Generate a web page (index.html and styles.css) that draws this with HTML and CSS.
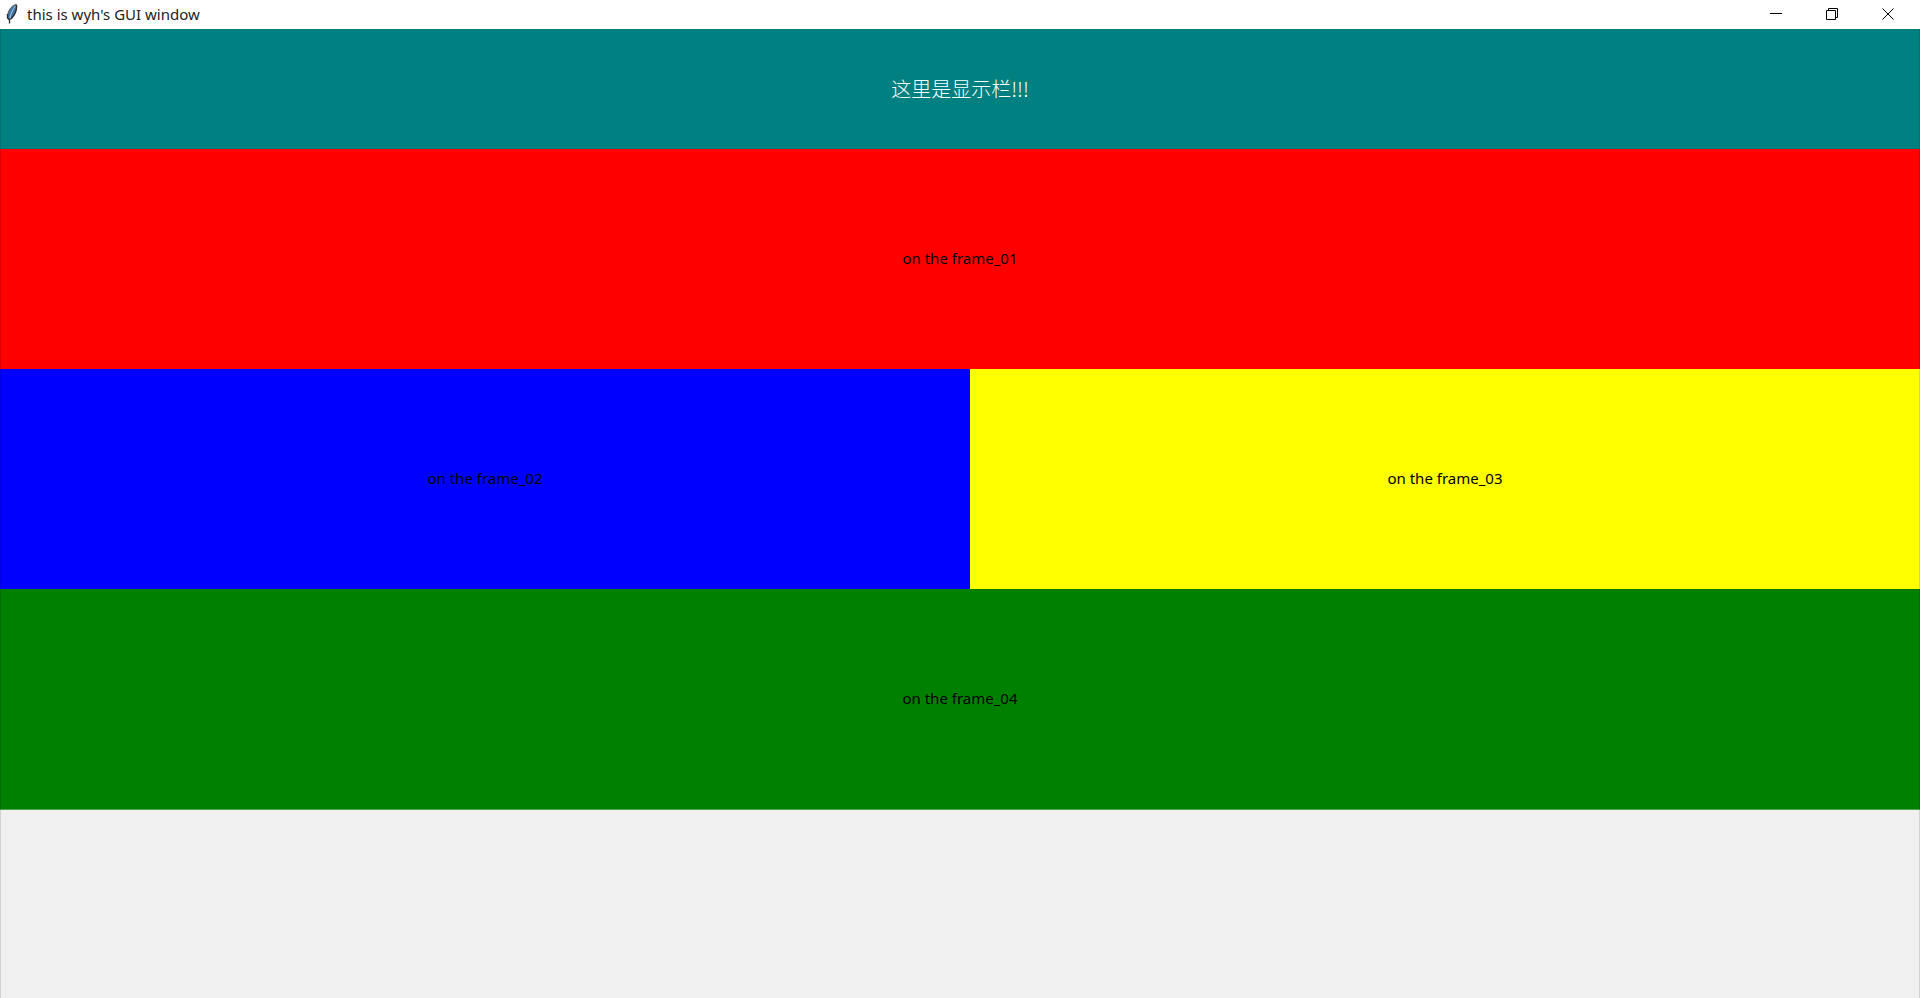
FILE: index.html
```html
<!DOCTYPE html>
<html lang="zh-CN">
<head>
<meta charset="utf-8">
<title>this is wyh's GUI window</title>
<link rel="stylesheet" href="styles.css">
</head>
<body>
<div class="window">
  <header class="titlebar">
    <svg class="feather" width="12" height="20" viewBox="0 0 12 20" aria-hidden="true">
      <path d="M10.500 .5C6.500 1 3 5 2 9.500L1.500 13l1.500 2.500 2-.5C8.500 12.500 11.500 5 10.500 .5z" fill="#4479ab" stroke="#55565c"/>
      <path d="M9.500 2C7 5 5 9 4 14" fill="none" stroke="#a5c9e8"/>
      <path d="M10.500 1.500C11 6 8.500 11 5 15M1.500 10v4l2 2v3.500" fill="none" stroke="#2b2b2e" stroke-width="1.300"/>
    </svg>
    <h1 class="title">this is wyh's GUI window</h1>
    <div class="controls">
      <button class="control" type="button" aria-label="Minimize">
        <svg width="12" height="12" viewBox="0 0 12 12"><path d="M0 5.500h12" /></svg>
      </button>
      <button class="control" type="button" aria-label="Restore">
        <svg width="12" height="12" viewBox="0 0 12 12"><path d="M.5 2.500h9v9h-9zM2.500 2.500v-2h9v9h-2"/></svg>
      </button>
      <button class="control" type="button" aria-label="Close">
        <svg width="12" height="12" viewBox="0 0 12 12"><path d="M.5 .5l11 11M11.500 .5l-11 11"/></svg>
      </button>
    </div>
  </header>
  <main class="client">
    <div class="display">这里是显示栏!!!</div>
    <div class="frame red">on the frame_01</div>
    <div class="split">
      <div class="frame blue">on the frame_02</div>
      <div class="frame yellow">on the frame_03</div>
    </div>
    <div class="frame green">on the frame_04</div>
  </main>
</div>
</body>
</html>
```

FILE: styles.css
```css
body {
  margin: 0;
  font-family: "Noto Sans", "Noto Sans CJK SC", sans-serif;
  color: #000;
}

.window {
  display: flex;
  flex-direction: column;
  min-height: 100vh;
}

.titlebar {
  display: flex;
  align-items: flex-start;
  box-sizing: border-box;
  height: 29px;
  padding: 0 4px 0 6px;
  background: #fff;
}

.feather {
  margin: 4px 9px 0 0;
}

.title {
  flex: 1;
  margin: 0;
  color: #222;
  font-size: 15px;
  font-weight: 400;
  line-height: 28px;
}

.controls {
  display: flex;
}

.control {
  display: flex;
  align-items: center;
  justify-content: center;
  width: 56px;
  height: 28px;
  padding: 0;
  border: 0;
  background: transparent;
}

.control svg {
  fill: none;
  stroke: #000;
}

.client {
  position: relative;
  flex: 1;
  background: #f0f0f0;
}

/* thin window edge over the frames */
.client::after {
  content: "";
  position: absolute;
  inset: 0;
  border: solid rgba(0, 0, 0, 0.12);
  border-width: 0 1px;
  pointer-events: none;
}

.display,
.frame {
  display: flex;
  align-items: center;
  justify-content: center;
  box-sizing: border-box;
  padding-bottom: 2px;
}

.display {
  height: 120px;
  background: #008080;
  color: #fff;
  font-family: "Noto Sans CJK SC", sans-serif;
  font-size: 20px;
  font-weight: 300;
}

.frame {
  height: 220px;
  font-size: 15px;
}

.split {
  display: grid;
  grid-template-columns: 97fr 95fr;
}

.red {
  background: #f00;
}

.blue {
  background: #00f;
}

.yellow {
  background: #ff0;
}

.green {
  background: #008000;
  box-shadow: 0 1px #4ca64c;
}
```
